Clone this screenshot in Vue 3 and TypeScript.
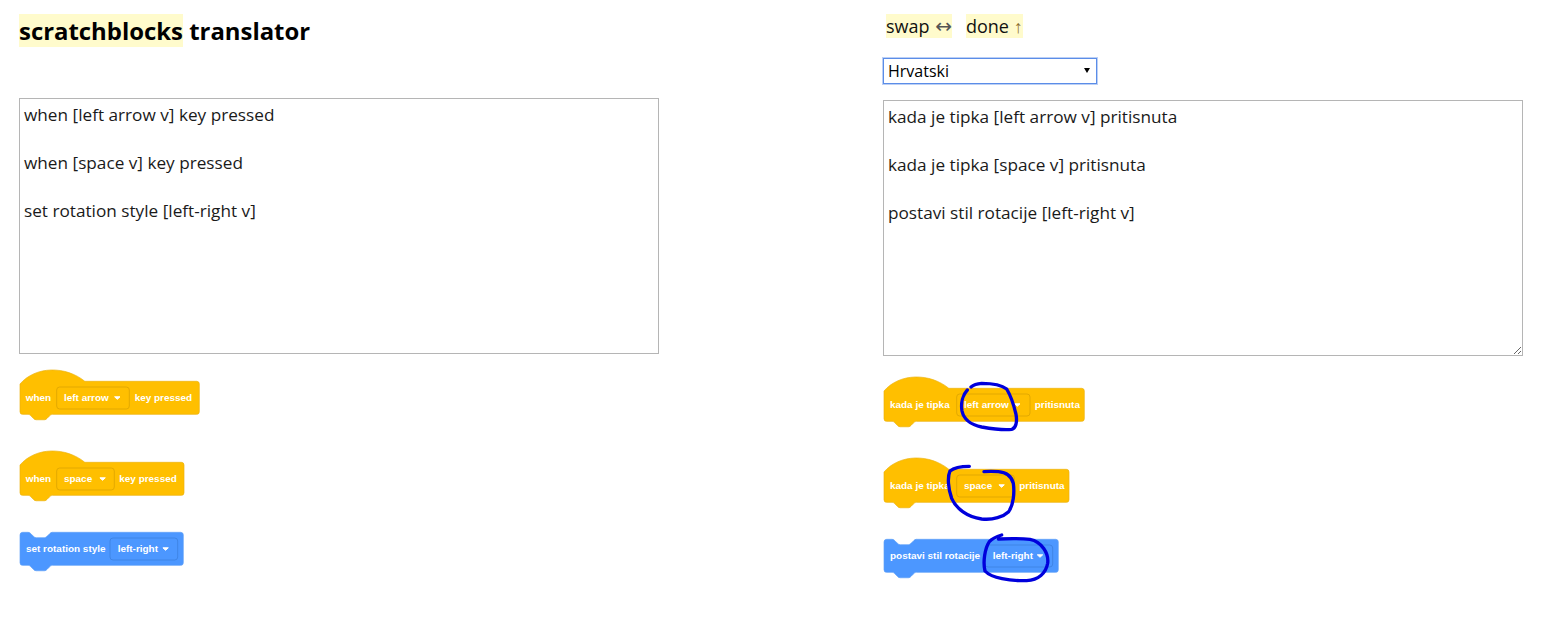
<script setup lang="ts">
interface Part { text: string; x: number }
interface Drop { x: number; w: number; text: string; tx: number; ax: number }
interface Block { kind: 'hat' | 'stack'; w: number; labels: Part[]; drop: Drop }

const S = 0.675

function blockPath(b: Block): string {
  const W = b.w / S
  const H = 49
  const side = `a4,4 0 0 1 4,4 L${W},${H - 4} a4,4 0 0 1 -4,4`
  const bottom = `L48,${H} c-2,0 -3,1 -4,2 l-4,4 c-1,1 -2,2 -4,2 h-12 c-2,0 -3,-1 -4,-2 l-4,-4 c-1,-1 -2,-2 -4,-2 L4,${H} a4,4 0 0 1 -4,-4`
  if (b.kind === 'hat') {
    return `M0,4 c23,-27 68,-27 96,-4 L${W - 4},0 ${side} ${bottom} Z`
  }
  return `M0,4 a4,4 0 0 1 4,-4 H12 c2,0 3,1 4,2 l4,4 c1,1 2,2 4,2 h12 c2,0 3,-1 4,-2 l4,-4 c1,-1 2,-2 4,-2 L${W - 4},0 ${side} ${bottom} Z`
}

const leftBlocks: Block[] = [
  { kind: 'hat', w: 179.3, labels: [{ text: 'when', x: 5.7 }, { text: 'key pressed', x: 114.7 }],
    drop: { x: 36.7, w: 72.6, text: 'left arrow', tx: 44, ax: 94 } },
  { kind: 'hat', w: 164, labels: [{ text: 'when', x: 5.7 }, { text: 'key pressed', x: 99.3 }],
    drop: { x: 36.7, w: 57.6, text: 'space', tx: 44, ax: 79.3 } },
  { kind: 'stack', w: 163.3, labels: [{ text: 'set rotation style', x: 6 }],
    drop: { x: 90, w: 67.7, text: 'left-right', tx: 97.7, ax: 142.3 } },
]

const rightBlocks: Block[] = [
  { kind: 'hat', w: 200.3, labels: [{ text: 'kada je tipka', x: 6 }, { text: 'pritisnuta', x: 150.7 }],
    drop: { x: 72.7, w: 73.3, text: 'left arrow', tx: 80, ax: 130 } },
  { kind: 'hat', w: 185, labels: [{ text: 'kada je tipka', x: 6 }, { text: 'pritisnuta', x: 135.3 }],
    drop: { x: 72.7, w: 57.6, text: 'space', tx: 80, ax: 114.3 } },
  { kind: 'stack', w: 174.3, labels: [{ text: 'postavi stil rotacije', x: 6 }],
    drop: { x: 101, w: 67.7, text: 'left-right', tx: 108.7, ax: 152.7 } },
]

const leftText = 'when [left arrow v] key pressed\n\nwhen [space v] key pressed\n\nset rotation style [left-right v]'
const rightText = 'kada je tipka [left arrow v] pritisnuta\n\nkada je tipka [space v] pritisnuta\n\npostavi stil rotacije [left-right v]'

const top = (b: Block) => (b.kind === 'hat' ? 11 : 0)
const arrow = (b: Block) => {
  const y = top(b) + 15.8
  return `M${b.drop.ax + 0.6},${y} h5.4 l-2.7,2.5 z`
}
const columns = [leftBlocks, rightBlocks]
</script>

<template>
  <div class="page">
    <section class="col left">
      <h1 class="title"><mark>scratchblocks</mark> translator</h1>
      <textarea class="code fixed" :value="leftText" spellcheck="false"></textarea>
      <div class="blocks">
        <svg
          v-for="b in columns[0]"
          :key="b.labels[0].text + b.drop.text"
          class="block"
          :class="b.kind"
          :width="b.w + 2"
          :height="top(b) + 39"
        >
          <g :transform="`translate(1 ${top(b) + 0.3})`">
            <path class="shape" :d="blockPath(b)" :transform="`scale(${S})`" />
          </g>
          <g :transform="`translate(1 0)`">
            <rect class="drop" :x="b.drop.x" :y="top(b) + 6" :width="b.drop.w" height="22" rx="3" />
            <text v-for="l in b.labels" :key="l.text" :x="l.x" :y="top(b) + 20.4">{{ l.text }}</text>
            <text :x="b.drop.tx" :y="top(b) + 20.4">{{ b.drop.text }}</text>
            <path class="arrow" :d="arrow(b)" />
          </g>
        </svg>
      </div>
    </section>

    <section class="col right">
      <nav class="actions">
        <mark>swap <span class="wide">↔</span></mark>
        <mark>done <span class="up">↑</span></mark>
      </nav>
      <div class="select-wrap">
        <select class="lang">
          <option>Hrvatski</option>
        </select>
        <span class="caret"></span>
      </div>
      <textarea class="code" :value="rightText" spellcheck="false"></textarea>
      <div class="blocks">
        <svg
          v-for="b in columns[1]"
          :key="b.labels[0].text + b.drop.text"
          class="block"
          :class="b.kind"
          :width="b.w + 2"
          :height="top(b) + 39"
        >
          <g :transform="`translate(1 ${top(b) + 0.3})`">
            <path class="shape" :d="blockPath(b)" :transform="`scale(${S})`" />
          </g>
          <g :transform="`translate(1 0)`">
            <rect class="drop" :x="b.drop.x" :y="top(b) + 6" :width="b.drop.w" height="22" rx="3" />
            <text v-for="l in b.labels" :key="l.text" :x="l.x" :y="top(b) + 20.4">{{ l.text }}</text>
            <text :x="b.drop.tx" :y="top(b) + 20.4">{{ b.drop.text }}</text>
            <path class="arrow" :d="arrow(b)" />
          </g>
        </svg>
        <svg class="scribble" width="230" height="225" viewBox="0 0 690 675">
          <path d="M292,75 C278,90 272,115 276,138 C282,165 305,180 335,186 C370,192 400,196 425,193 C438,190 442,170 438,148 C432,122 424,95 410,72 C395,60 365,55 335,55 C322,56 310,60 303,66" />
          <path d="M298,304 C275,304 252,308 240,318 C232,335 234,370 245,400 C258,430 290,455 335,462 C370,466 400,455 416,440 C430,420 434,385 430,355 C425,335 410,322 385,320 C370,319 355,319 342,320" />
          <path d="M395,510 C378,515 365,522 358,530 C345,550 338,590 345,618 C365,640 420,648 470,647 C505,645 528,625 533,595 C537,565 515,530 480,523 C450,520 410,521 385,522" />
        </svg>
      </div>
    </section>
  </div>
</template>

<style scoped>
.page {
  display: grid;
  grid-template-columns: 883px 640px;
  width: 1566px;
  height: 622px;
  overflow: hidden;
  background: #fff;
  color: #111;
  font-family: "Open Sans", sans-serif;
  font-size: 16px;
  line-height: 24px;
}
.col {
  display: flex;
  flex-direction: column;
  align-items: flex-start;
}
.left {
  padding-left: 19px;
}
.title {
  margin: 14px 0 51px;
  font-size: 23.9px;
  line-height: 33px;
  font-weight: 700;
  color: #000;
}
mark {
  background: #fffbcc;
  color: inherit;
}
.actions {
  display: flex;
  gap: 14px;
  height: 24px;
  margin: 14px 0 20px 3px;
  font-family: "Open Sans", "Liberation Sans", sans-serif;
  font-size: 18px;
  line-height: 24px;
}
.wide {
  margin-left: 1px;
  font-family: "DejaVu Sans", sans-serif;
  font-size: 20px;
  font-weight: 400;
  line-height: 0;
  color: #555;
}
.up {
  color: #8a6a2a;
}
.select-wrap {
  position: relative;
  width: 214px;
  height: 26px;
  margin-bottom: 16px;
}
.lang {
  appearance: none;
  display: block;
  width: 100%;
  height: 100%;
  box-sizing: border-box;
  padding: 0 4px;
  border: 1px solid #5b8de8;
  border-radius: 0;
  outline: 1px solid #bcd0f5;
  outline-offset: 0;
  background: #fff;
  color: #000;
  font: 16px/24px "Open Sans", sans-serif;
}
.caret {
  position: absolute;
  right: 7px;
  top: 10px;
  width: 0;
  height: 0;
  border-left: 3.5px solid transparent;
  border-right: 3.5px solid transparent;
  border-top: 5px solid #000;
}
.code {
  display: block;
  box-sizing: border-box;
  width: 640px;
  height: 256px;
  margin: 0;
  padding: 4px;
  border: 1px solid #b5b5b5;
  border-radius: 0;
  outline: none;
  background: #fff;
  color: #1a1a1a;
  font: 17.2px/24px "Open Sans", sans-serif;
  overflow: hidden;
}
.fixed {
  resize: none;
}
.blocks {
  position: relative;
  display: flex;
  flex-direction: column;
  align-items: flex-start;
  gap: 31px;
  margin-top: 16px;
}
.right .blocks {
  margin-top: 21px;
}
.block {
  display: block;
  overflow: visible;
}
.shape {
  stroke-width: 1;
}
.hat .shape {
  fill: #ffbf00;
  stroke: #ecb20c;
}
.stack .shape {
  fill: #4c97ff;
  stroke: #5e9ff7;
}
.drop {
  stroke-width: 1;
  fill: none;
}
.hat .drop {
  stroke: #e3a900;
}
.stack .drop {
  stroke: #3f85e6;
}
.block text {
  fill: #fff;
  font-family: "Liberation Sans", sans-serif;
  font-size: 9.95px;
  font-weight: 700;
}
.arrow {
  fill: #fff;
  stroke: #fff;
  stroke-width: 1;
  stroke-linejoin: round;
}
.scribble {
  position: absolute;
  left: -13px;
  top: -12px;
  pointer-events: none;
}
.scribble path {
  fill: none;
  stroke: #0000dc;
  stroke-width: 10;
  stroke-linecap: round;
  stroke-linejoin: round;
}
</style>
